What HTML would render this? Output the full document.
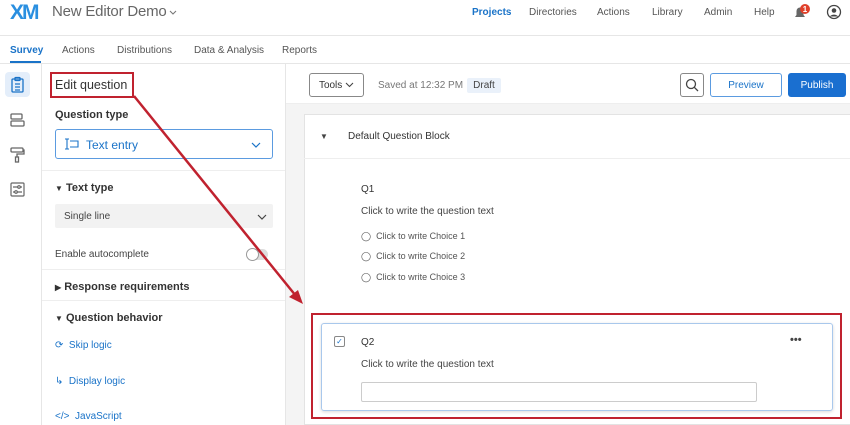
<!DOCTYPE html>
<html><head><style>
*{box-sizing:border-box;margin:0;padding:0}
body{width:850px;height:425px;overflow:hidden;font-family:"Liberation Sans",sans-serif;background:#fff;position:relative;color:#333}
.a{position:absolute}
.t{font-size:10px;color:#555}
.c{display:flex;align-items:center;justify-content:center}
</style></head><body>
<!-- top bar -->
<div class="a" style="left:0;top:0;width:850px;height:36px;border-bottom:1px solid #e6e6e6"></div>
<div class="a" style="left:10px;top:1px;font-size:21px;font-weight:bold;letter-spacing:-2px;color:#2a8fe0">XM</div>
<div class="a" style="left:52px;top:3px;font-size:15px;color:#666;letter-spacing:-0.2px">New Editor Demo</div>
<svg class="a" style="left:169px;top:10px" width="8" height="6" fill="none" stroke="#777" stroke-width="1.1"><path d="M1 1l3 3 3-3"/></svg>
<div class="a" style="left:472px;top:7px;font-size:10px;color:#1a73c8;font-weight:bold">Projects</div>
<div class="a t" style="left:529px;top:7px">Directories</div>
<div class="a t" style="left:597px;top:7px">Actions</div>
<div class="a t" style="left:652px;top:7px">Library</div>
<div class="a t" style="left:704px;top:7px">Admin</div>
<div class="a t" style="left:754px;top:7px">Help</div>
<svg class="a" style="left:792px;top:3px" width="22" height="16"><path d="M3 14h10l-1.5-2V8a3.5 3.5 0 0 0-7 0v4z" fill="#666"/><circle cx="13" cy="6" r="5" fill="#e0402a"/><text x="13" y="9" font-size="8" fill="#fff" text-anchor="middle" font-family="Liberation Sans" font-weight="bold">1</text></svg>
<svg class="a" style="left:826px;top:4px" width="16" height="16"><circle cx="8" cy="8" r="6.5" fill="none" stroke="#444" stroke-width="1.3"/><circle cx="8" cy="6.5" r="2.3" fill="#444"/><path d="M3.8 12.5a5 4 0 0 1 8.4 0" fill="#444"/></svg>
<!-- tabs -->
<div class="a" style="left:0;top:36px;width:850px;height:28px;border-bottom:1px solid #e6e6e6"></div>
<div class="a" style="left:10px;top:45px;font-size:10px;font-weight:bold;color:#1a73c8">Survey</div>
<div class="a" style="left:10px;top:61px;width:31px;height:2px;background:#1a73c8"></div>
<div class="a t" style="left:62px;top:45px">Actions</div>
<div class="a t" style="left:117px;top:45px">Distributions</div>
<div class="a t" style="left:194px;top:45px">Data &amp; Analysis</div>
<div class="a t" style="left:282px;top:45px">Reports</div>
<!-- icon rail -->
<div class="a" style="left:41px;top:64px;width:1px;height:361px;background:#e6e6e6"></div>
<div class="a" style="left:5px;top:72px;width:25px;height:25px;background:#e4eefa;border-radius:4px"></div>
<svg class="a" style="left:9px;top:76px" width="17" height="17" fill="none" stroke="#1a73c8" stroke-width="1.3"><rect x="3" y="3" width="11" height="13" rx="1"/><rect x="6" y="1.5" width="5" height="3" rx=".5"/><path d="M6 8h5M6 11h5M6 14h5"/></svg>
<svg class="a" style="left:9px;top:112px" width="17" height="17" fill="none" stroke="#666" stroke-width="1.3"><rect x="2" y="2" width="11" height="5" rx="1"/><rect x="2" y="9" width="13" height="5" rx="1"/></svg>
<svg class="a" style="left:9px;top:146px" width="17" height="17" fill="none" stroke="#666" stroke-width="1.3"><rect x="2" y="2" width="12" height="4" rx="1"/><path d="M14 4h1v4H8v3"/><rect x="6.5" y="11" width="3" height="5"/></svg>
<svg class="a" style="left:9px;top:181px" width="17" height="17" fill="none" stroke="#666" stroke-width="1.2"><rect x="2" y="2" width="13" height="13" rx="1"/><path d="M4 6h9M4 11h9"/><circle cx="10" cy="6" r="1.3" fill="#fff"/><circle cx="7" cy="11" r="1.3" fill="#fff"/></svg>
<!-- left panel -->
<div class="a" style="left:285px;top:64px;width:1px;height:361px;background:#e6e6e6"></div>
<div class="a" style="left:55px;top:78px;font-size:12.5px;color:#333">Edit question</div>
<div class="a" style="left:50px;top:72px;width:84px;height:26px;border:2.5px solid #c0222f"></div>
<div class="a" style="left:55px;top:109px;font-size:11px;font-weight:bold">Question type</div>
<div class="a" style="left:55px;top:129px;width:218px;height:30px;border:1px solid #5b9be0;border-radius:3px"></div>
<svg class="a" style="left:64px;top:138px" width="16" height="12" fill="none" stroke="#1a73c8" stroke-width="1.1"><path d="M3 1v10M1 1h4M1 11h4M6 3h8v6H6"/></svg>
<div class="a" style="left:86px;top:138px;font-size:12px;color:#1a73c8">Text entry</div>
<svg class="a" style="left:251px;top:142px" width="10" height="6" fill="none" stroke="#1a73c8" stroke-width="1.2"><path d="M1 1l4 4 4-4"/></svg>
<div class="a" style="left:42px;top:170px;width:243px;height:1px;background:#eee"></div>
<div class="a" style="left:55px;top:182px;font-size:11px;font-weight:bold"><span style="font-size:8px">▼</span> Text type</div>
<div class="a" style="left:55px;top:204px;width:218px;height:24px;background:#f2f2f2;border-radius:2px"></div>
<div class="a" style="left:64px;top:211px;font-size:10px;color:#444">Single line</div>
<svg class="a" style="left:257px;top:214px" width="10" height="6" fill="none" stroke="#444" stroke-width="1.2"><path d="M1 1l4 4 4-4"/></svg>
<div class="a" style="left:55px;top:249px;font-size:10px;color:#444">Enable autocomplete</div>
<div class="a" style="left:247px;top:249px;width:21px;height:11px;border-radius:6px;background:#ddd"></div>
<div class="a" style="left:246px;top:248px;width:13px;height:13px;border-radius:50%;background:#fff;border:1px solid #999"></div>
<div class="a" style="left:42px;top:269px;width:243px;height:1px;background:#eee"></div>
<div class="a" style="left:55px;top:281px;font-size:11px;font-weight:bold"><span style="font-size:8px">▶</span> Response requirements</div>
<div class="a" style="left:42px;top:300px;width:243px;height:1px;background:#eee"></div>
<div class="a" style="left:55px;top:312px;font-size:11px;font-weight:bold"><span style="font-size:8px">▼</span> Question behavior</div>
<div class="a" style="left:55px;top:340px;font-size:10px;color:#1a73c8">⟳ &nbsp;Skip logic</div>
<div class="a" style="left:55px;top:376px;font-size:10px;color:#1a73c8">↳ &nbsp;Display logic</div>
<div class="a" style="left:55px;top:411px;font-size:10px;color:#1a73c8">&lt;/&gt; &nbsp;JavaScript</div>
<!-- right -->
<div class="a" style="left:286px;top:64px;width:564px;height:361px;background:#f4f4f4"></div>
<div class="a" style="left:286px;top:64px;width:564px;height:40px;background:#fff;border-bottom:1px solid #eee"></div>
<div class="a c" style="left:309px;top:73px;width:55px;height:24px;border:1px solid #888;border-radius:3px;font-size:10px;color:#333">Tools&nbsp;<svg width="9" height="6" fill="none" stroke="#444" stroke-width="1.1"><path d="M1 1l3.5 3.5L8 1"/></svg></div>
<div class="a" style="left:378px;top:80px;font-size:10px;color:#777">Saved at 12:32 PM</div>
<div class="a c" style="left:467px;top:78px;width:34px;height:15px;background:#eaf1fa;border-radius:2px;font-size:10px;color:#444">Draft</div>
<div class="a" style="left:680px;top:73px;width:24px;height:24px;border:1px solid #888;border-radius:3px"></div>
<svg class="a" style="left:684px;top:77px" width="16" height="16" fill="none" stroke="#444" stroke-width="1.3"><circle cx="7" cy="7" r="4.5"/><path d="M10.3 10.3L14 14"/></svg>
<div class="a c" style="left:710px;top:73px;width:72px;height:24px;border:1px solid #5b9be0;border-radius:3px;font-size:10px;color:#1a73c8">Preview</div>
<div class="a c" style="left:788px;top:73px;width:58px;height:24px;background:#1a6fd0;border-radius:3px;font-size:10px;color:#fff">Publish</div>
<div class="a" style="left:304px;top:114px;width:546px;height:311px;background:#fff;border:1px solid #e3e3e3;border-right:none"></div>
<div class="a" style="left:304px;top:158px;width:546px;height:1px;background:#eee"></div>
<div class="a" style="left:320px;top:132px;font-size:8px;color:#444">▼</div>
<div class="a" style="left:348px;top:131px;font-size:10px;color:#333">Default Question Block</div>
<div class="a" style="left:361px;top:184px;font-size:10px">Q1</div>
<div class="a" style="left:361px;top:206px;font-size:10px;color:#444">Click to write the question text</div>
<div class="a" style="left:361px;top:231px;font-size:9px;color:#555">◯ &nbsp;Click to write Choice 1</div>
<div class="a" style="left:361px;top:251px;font-size:9px;color:#555">◯ &nbsp;Click to write Choice 2</div>
<div class="a" style="left:361px;top:272px;font-size:9px;color:#555">◯ &nbsp;Click to write Choice 3</div>
<div class="a" style="left:321px;top:323px;width:512px;height:88px;border:1px solid #a9c8ec;border-radius:3px;box-shadow:0 1px 3px rgba(0,0,0,.15)"></div>
<div class="a" style="left:334px;top:336px;width:11px;height:11px;border:1px solid #888;border-radius:2px;font-size:8px;color:#1a73c8;text-align:center;line-height:10px">✓</div>
<div class="a" style="left:361px;top:337px;font-size:10px">Q2</div>
<div class="a" style="left:790px;top:334px;font-size:11px;font-weight:bold;color:#444">•••</div>
<div class="a" style="left:361px;top:359px;font-size:10px;color:#444">Click to write the question text</div>
<div class="a" style="left:361px;top:382px;width:396px;height:20px;border:1px solid #ccc;border-radius:2px"></div>
<div class="a" style="left:311px;top:313px;width:531px;height:106px;border:2.5px solid #c0222f"></div>
<!-- arrow -->
<svg class="a" style="left:0;top:0" width="850" height="425"><path d="M134 96L296 296" stroke="#c0222f" stroke-width="2.5"/><path d="M303 304L289 297L298 290z" fill="#c0222f"/></svg>
</body></html>
